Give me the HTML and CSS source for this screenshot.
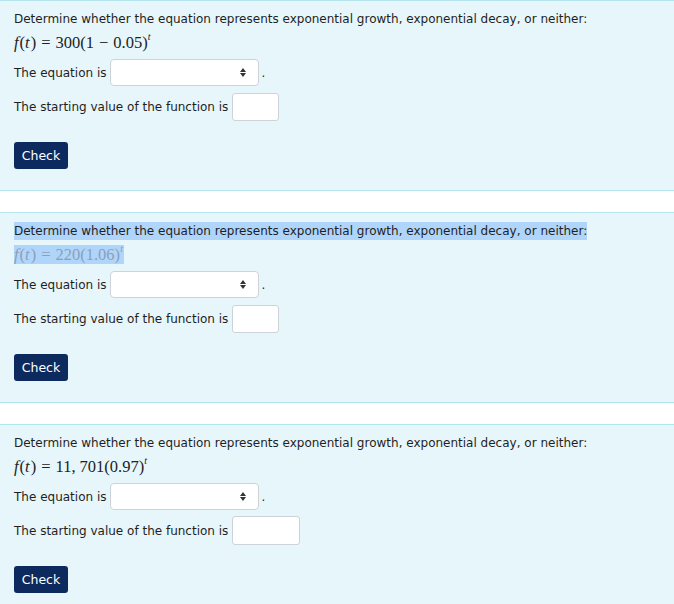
FILE: index.html
```html
<!DOCTYPE html>
<html lang="en">
<head>
  <meta charset="UTF-8" />
  <meta name="viewport" content="width=device-width, initial-scale=1.0" />
  <title>Exponential Functions</title>
  <link rel="stylesheet" href="styles.css">
</head>
<body>
  <div class="problem">
    <p class="prompt">Determine whether the equation represents exponential growth, exponential decay, or neither:</p>
    <div class="eq"><i>f</i>(<i>t</i>)<span class="op">=</span>300(1<span class="op">&minus;</span>0.05)<sup><i>t</i></sup></div>
    <div class="row">The equation is <span class="select"><svg width="6" height="9" viewBox="0 0 6 9"><path d="M0 4 L3 0 L6 4 Z M0 5 L3 9 L6 5 Z" fill="#333"/></svg></span><span class="dot">.</span></div>
    <div class="row row2">The starting value of the function is <span class="answer"></span></div>
    <button class="check">Check</button>
  </div>

  <div class="problem">
    <p class="prompt"><span class="sel">Determine whether the equation represents exponential growth, exponential decay, or neither:</span></p>
    <div class="eq"><span class="sel faded"><i>f</i>(<i>t</i>)<span class="op">=</span>220(1.06)<sup><i>t</i></sup></span></div>
    <div class="row">The equation is <span class="select"><svg width="6" height="9" viewBox="0 0 6 9"><path d="M0 4 L3 0 L6 4 Z M0 5 L3 9 L6 5 Z" fill="#333"/></svg></span><span class="dot">.</span></div>
    <div class="row row2">The starting value of the function is <span class="answer"></span></div>
    <button class="check">Check</button>
  </div>

  <div class="problem">
    <p class="prompt">Determine whether the equation represents exponential growth, exponential decay, or neither:</p>
    <div class="eq"><i>f</i>(<i>t</i>)<span class="op">=</span>11,<span class="thin"></span>701(0.97)<sup><i>t</i></sup></div>
    <div class="row">The equation is <span class="select"><svg width="6" height="9" viewBox="0 0 6 9"><path d="M0 4 L3 0 L6 4 Z M0 5 L3 9 L6 5 Z" fill="#333"/></svg></span><span class="dot">.</span></div>
    <div class="row row2">The starting value of the function is <span class="answer wide"></span></div>
    <button class="check">Check</button>
  </div>
</body>
</html>
```

FILE: styles.css
```css
body {
  margin: 0;
  font-family: "DejaVu Sans", Verdana, sans-serif;
  font-size: 12px;
  color: #1f1f1f;
  background: #fff;
}
.problem {
  background: #e7f6fa;
  border-top: 1px solid #b5e5ee;
  border-bottom: 1px solid #b5e5ee;
  padding: 9px 14px 21px;
  margin-bottom: 21px;
}
.prompt {
  margin: 0;
  line-height: 18px;
}
.prompt .sel {
  padding: 2px 0;
}
.eq {
  margin-top: 5px;
  line-height: 20px;
  font-family: "Liberation Serif", "Times New Roman", serif;
  font-size: 16.5px;
  color: #222;
}
.eq i {
  padding-right: 1px;
}
.op {
  padding: 0 5px;
}
.thin {
  padding-left: 4px;
}
.eq sup {
  font-size: 10px;
  vertical-align: 8px;
  line-height: 0;
}
.sel {
  background: #b0d5fb;
}
.faded {
  color: #8c9fb8;
}
.row {
  display: flex;
  align-items: center;
  margin-top: 6px;
  height: 27px;
}
.row2 {
  margin-top: 7px;
}
.select {
  display: flex;
  align-items: center;
  justify-content: flex-end;
  box-sizing: border-box;
  width: 149px;
  height: 27px;
  margin-left: 4px;
  padding-right: 12px;
  background: #fff;
  border: 1px solid #cdd3d8;
  border-radius: 4px;
}
.dot {
  margin-left: 2px;
}
.answer {
  box-sizing: border-box;
  width: 47px;
  height: 28px;
  margin-left: 4px;
  background: #fff;
  border: 1px solid #cdd3d8;
  border-radius: 3px;
}
.answer.wide {
  width: 68px;
  height: 29px;
}
.check {
  display: block;
  margin-top: 22px;
  width: 54px;
  height: 27px;
  padding: 0;
  background: #0c2a5e;
  color: #fff;
  border: none;
  border-radius: 3px;
  font-family: "DejaVu Sans", Verdana, sans-serif;
  font-size: 12.5px;
}
```
